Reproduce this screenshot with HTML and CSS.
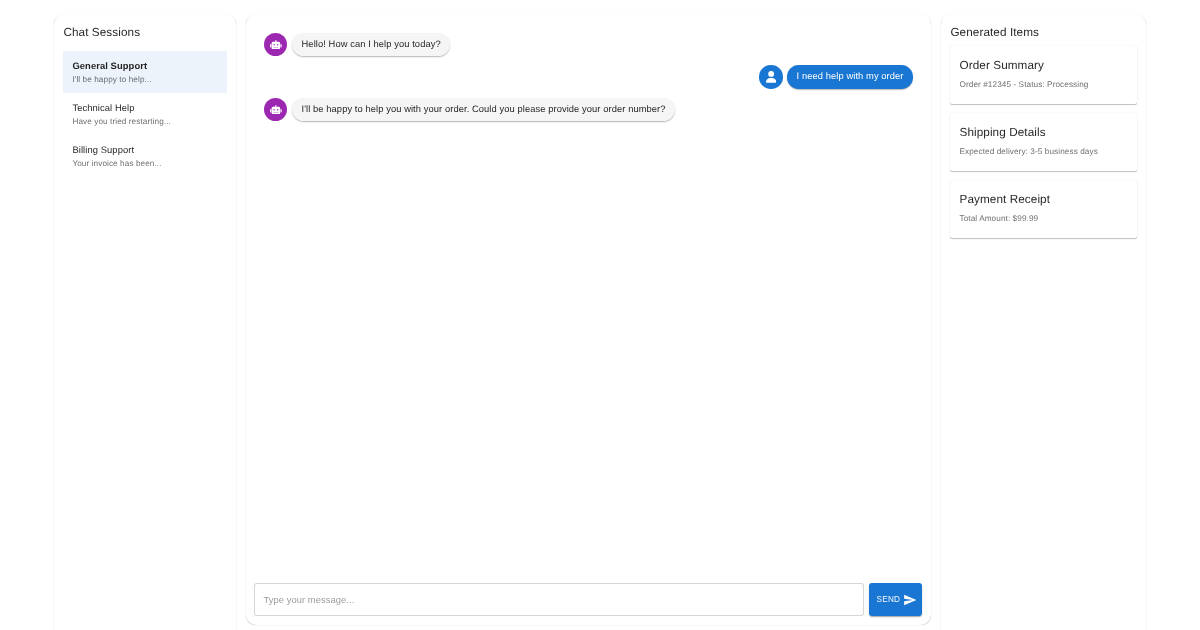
FILE: index.html
```html
<!DOCTYPE html>
<html lang="en">
<head>
<meta charset="utf-8">
<title>Chat</title>
<link rel="stylesheet" href="styles.css">
</head>
<body>
<main class="layout">
  <aside class="panel sessions">
    <h2 class="panel-title">Chat Sessions</h2>
    <ul class="session-list">
      <li class="session active"><span class="session-name">General Support</span><span class="session-preview">I'll be happy to help...</span></li>
      <li class="session"><span class="session-name">Technical Help</span><span class="session-preview">Have you tried restarting...</span></li>
      <li class="session"><span class="session-name">Billing Support</span><span class="session-preview">Your invoice has been...</span></li>
    </ul>
  </aside>
  <section class="panel chat">
    <div class="messages">
      <div class="message">
        <span class="avatar bot"><svg class="robot-icon" viewBox="0 0 640 512"><path d="M320 0c17.7 0 32 14.3 32 32V96H472c44.2 0 80 35.8 80 80V432c0 44.2-35.8 80-80 80H168c-44.2 0-80-35.8-80-80V176c0-44.2 35.8-80 80-80H288V32c0-17.7 14.3-32 32-32zM208 384c-8.8 0-16 7.2-16 16s7.2 16 16 16h32c8.8 0 16-7.2 16-16s-7.2-16-16-16H208zm96 0c-8.8 0-16 7.2-16 16s7.2 16 16 16h32c8.8 0 16-7.2 16-16s-7.2-16-16-16H304zm96 0c-8.8 0-16 7.2-16 16s7.2 16 16 16h32c8.8 0 16-7.2 16-16s-7.2-16-16-16H400zM264 256a40 40 0 1 0 -80 0 40 40 0 1 0 80 0zm152 40a40 40 0 1 0 0-80 40 40 0 1 0 0 80zM48 224H64V416H48c-26.5 0-48-21.5-48-48V272c0-26.5 21.5-48 48-48zm544 0c26.5 0 48 21.5 48 48v96c0 26.5-21.5 48-48 48H576V224h16z"/></svg></span>
        <div class="bubble">Hello! How can I help you today?</div>
      </div>
      <div class="message mine">
        <span class="avatar user"><svg class="user-icon" viewBox="0 0 448 512"><path d="M224 256A128 128 0 1 0 224 0a128 128 0 1 0 0 256zm-45.7 48C79.8 304 0 383.8 0 482.3C0 498.7 13.3 512 29.7 512H418.3c16.4 0 29.7-13.3 29.7-29.7C448 383.8 368.2 304 269.7 304H178.3z"/></svg></span>
        <div class="bubble blue">I need help with my order</div>
      </div>
      <div class="message">
        <span class="avatar bot"><svg class="robot-icon" viewBox="0 0 640 512"><path d="M320 0c17.7 0 32 14.3 32 32V96H472c44.2 0 80 35.8 80 80V432c0 44.2-35.8 80-80 80H168c-44.2 0-80-35.8-80-80V176c0-44.2 35.8-80 80-80H288V32c0-17.7 14.3-32 32-32zM208 384c-8.8 0-16 7.2-16 16s7.2 16 16 16h32c8.8 0 16-7.2 16-16s-7.2-16-16-16H208zm96 0c-8.8 0-16 7.2-16 16s7.2 16 16 16h32c8.8 0 16-7.2 16-16s-7.2-16-16-16H304zm96 0c-8.8 0-16 7.2-16 16s7.2 16 16 16h32c8.8 0 16-7.2 16-16s-7.2-16-16-16H400zM264 256a40 40 0 1 0 -80 0 40 40 0 1 0 80 0zm152 40a40 40 0 1 0 0-80 40 40 0 1 0 0 80zM48 224H64V416H48c-26.5 0-48-21.5-48-48V272c0-26.5 21.5-48 48-48zm544 0c26.5 0 48 21.5 48 48v96c0 26.5-21.5 48-48 48H576V224h16z"/></svg></span>
        <div class="bubble">I'll be happy to help you with your order. Could you please provide your order number?</div>
      </div>
    </div>
    <form class="composer">
      <input class="composer-input" type="text" placeholder="Type your message...">
      <button class="send" type="button">SEND<svg class="send-icon" viewBox="0 0 24 24"><path d="M2.01 21 23 12 2.01 3 2 10l15 2-15 2z"/></svg></button>
    </form>
  </section>
  <aside class="panel items">
    <h2 class="panel-title">Generated Items</h2>
    <div class="item-list">
      <article class="card"><h3 class="card-title">Order Summary</h3><p class="card-text">Order #12345 - Status: Processing</p></article>
      <article class="card"><h3 class="card-title">Shipping Details</h3><p class="card-text">Expected delivery: 3-5 business days</p></article>
      <article class="card"><h3 class="card-title">Payment Receipt</h3><p class="card-text">Total Amount: $99.99</p></article>
    </div>
  </aside>
</main>
</body>
</html>
```
FILE: styles.css
```css
* { box-sizing: border-box; }
html, body { margin: 0; height: 100%; overflow: hidden; }
body {
  background: #fff;
  color: rgba(0,0,0,.87);
  font-family: "Liberation Sans", Arial, sans-serif;
  text-rendering: geometricPrecision;
}
.layout {
  display: grid;
  grid-template-columns: 182px 685px 205px;
  gap: 10px;
  width: 1092px;
  height: 650px;
  margin: 0 auto;
  padding-top: 14px;
  align-items: start;
  will-change: transform;
}
.panel {
  background: #fff;
  border-radius: 10px;
  box-shadow: 0 0 1.5px rgba(0,0,0,.06), 0 .5px 1px -.8px rgba(0,0,0,.3);
}
.sessions, .items { height: 640px; padding: 10.9px 9px 9px; }
.panel-title {
  margin: 0 0 0 .4px;
  font-size: 11.73px;
  line-height: 16.5px;
  font-weight: 400;
  letter-spacing: .088px;
}
.session-list { list-style: none; margin: 9.6px 0 0; padding: 0; }
.session { display: flex; flex-direction: column; height: 42.2px; padding: 6.8px 9.4px 0; }
.session.active { background: #edf3fa; }
.session-name { font-size: 9.39px; line-height: 16.2px; letter-spacing: .088px; }
.active .session-name { font-weight: 700; }
.session-preview { font-size: 8.2px; line-height: 12px; letter-spacing: .088px; color: rgba(0,0,0,.6); }
.chat { display: flex; flex-direction: column; height: 611px; padding: 19px 9.4px 9.4px 18px; }
.messages { flex: 1; display: flex; flex-direction: column; gap: 8.9px; padding-right: 8.7px; }
.message { display: flex; align-items: center; gap: 4.7px; }
.message.mine { justify-content: flex-end; }
.avatar {
  width: 23.47px; height: 23.47px; border-radius: 50%;
  display: flex; align-items: center; justify-content: center;
  flex: none;
}
.avatar.bot { background: #9c27b0; }
.avatar.user { background: #1976d2; }
.robot-icon { width: 11.73px; height: 9.39px; fill: #fff; }
.user-icon { width: 10.27px; height: 11.73px; fill: #fff; }
.bubble {
  background: #f5f5f5;
  border-radius: 11.7px;
  padding: 0 9.39px;
  height: 23.47px;
  line-height: 23.47px;
  font-size: 9.33px;
  letter-spacing: .088px;
  box-shadow: 0 1px 1px -.5px rgba(0,0,0,.3), 0 1px 2px rgba(0,0,0,.14);
}
.bubble.blue { background: #1976d2; color: #fff; }
.composer { display: flex; gap: 4.7px; margin-left: -9.6px; }
.composer-input {
  flex: 1; height: 33px; min-width: 0;
  border: 1px solid rgba(0,0,0,.16);
  border-radius: 3px;
  padding: 1px 7.5px 0 8px;
  font: 9.33px "Liberation Sans", Arial, sans-serif;
  letter-spacing: .088px;
  outline: none;
}
.composer-input::placeholder { color: rgba(0,0,0,.42); opacity: 1; }
.send {
  width: 53px; height: 33px;
  display: flex; align-items: center; justify-content: flex-start; gap: 3.2px;
  background: #1976d2; color: rgba(255,255,255,.95);
  border: 0; border-radius: 3px; padding: 1px 0 0 8px;
  font: 8.2px "Liberation Sans", Arial, sans-serif;
  letter-spacing: .2px;
  box-shadow: 0 2px 1px -1px rgba(0,0,0,.2), 0 1px 2px rgba(0,0,0,.2);
}
.send-icon { width: 14px; height: 14px; fill: #fff; }
.item-list { display: flex; flex-direction: column; gap: 9.39px; margin-top: 4.7px; }
.card {
  height: 57.6px;
  padding: 11.6px 9.5px;
  border-radius: 2.5px;
  background: #fff;
  box-shadow: 0 1px 1px -.5px rgba(0,0,0,.24), 0 0 2px rgba(0,0,0,.07);
}
.card-title { margin: 0; font-size: 11.73px; line-height: 16px; font-weight: 400; letter-spacing: .088px; }
.card-text { margin: 4.9px 0 0; font-size: 8.2px; line-height: 12px; letter-spacing: .088px; color: rgba(0,0,0,.6); }
```
